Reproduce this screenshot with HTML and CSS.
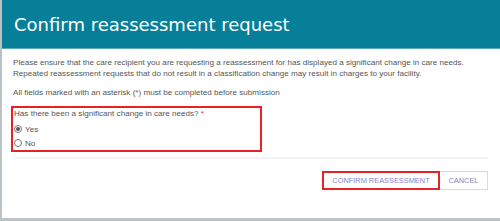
FILE: index.html
```html
<!DOCTYPE html>
<html lang="en">
  <head>
    <meta charset="UTF-8" />
    <title>Confirm reassessment request</title>
    <link rel="stylesheet" href="styles.css">
  </head>
  <body>
    <div class="dialog">
      <div class="dialog-header">
        <h1>Confirm reassessment request</h1>
      </div>
      <div class="dialog-body">
        <p class="intro">
          Please ensure that the care recipient you are requesting a reassessment for has displayed a significant change in care needs.<br>
          Repeated reassessment requests that do not result in a classification change may result in charges to your facility.
        </p>
        <p class="note">All fields marked with an asterisk (<span class="req">*</span>) must be completed before submission</p>
        <div class="question">
          <div class="label">Has there been a significant change in care needs? <span class="req">*</span></div>
          <label class="option first"><span class="radio checked"></span>Yes</label>
          <label class="option"><span class="radio"></span>No</label>
        </div>
      </div>
      <div class="dialog-footer">
        <button class="btn btn-confirm">CONFIRM REASSESSMENT</button>
        <button class="btn btn-cancel">CANCEL</button>
      </div>
    </div>
  </body>
</html>
```

FILE: styles.css
```css
body {
  margin: 0;
  padding: 0;
  background: #b9c3c6;
  height: 221px;
  overflow: hidden;
}
.dialog {
  margin-left: 2px;
  width: 498px;
  height: 218px;
  background: #fff;
  font-family: "Liberation Sans", Arial, sans-serif;
  color: #555;
}
.dialog-header {
  background: #087f99;
  height: 49px;
  border-bottom: 1px solid #5ea9ba;
  box-sizing: border-box;
  padding-left: 12px;
}
.dialog-header h1 {
  margin: 0;
  font-family: "DejaVu Sans", sans-serif;
  font-weight: normal;
  font-size: 18px;
  line-height: 50px;
  color: #fff;
}
.dialog-body {
  padding: 8px 12px 0 11px;
  font-size: 8.1px;
}
.intro {
  margin: 0;
  line-height: 11px;
}
.note {
  margin: 8px 0 0 0;
  line-height: 11px;
}
.req {
  color: #e5262e;
}
.question {
  margin-top: 8px;
  margin-left: -2px;
  width: 246px;
  border: 2px solid #e8202a;
  padding: 0 0 0 1px;
}
.label {
  line-height: 11px;
}
.option {
  display: flex;
  align-items: center;
  height: 14px;
}
.option.first {
  margin-top: 3px;
}
.radio {
  width: 6px;
  height: 6px;
  border: 1px solid #777;
  border-radius: 50%;
  margin-right: 3px;
  display: flex;
  align-items: center;
  justify-content: center;
}
.radio.checked::after {
  content: "";
  width: 4px;
  height: 4px;
  border-radius: 50%;
  background: #555;
}
.dialog-footer {
  margin: 5px 12px 0 12px;
  border-top: 2px solid #f3f3f3;
  padding-top: 12px;
  display: flex;
  justify-content: flex-end;
}
.btn {
  font-family: "Liberation Sans", Arial, sans-serif;
  font-size: 7.4px;
  color: #8d7fbe;
  background: #fff;
  height: 19px;
  padding: 0 5px;
  cursor: pointer;
}
.btn-confirm {
  border: 2px solid #e8202a;
  width: 118px;
}
.btn-cancel {
  border: 1px solid #ddd6ef;
  border-left: none;
  width: 48px;
}
```
